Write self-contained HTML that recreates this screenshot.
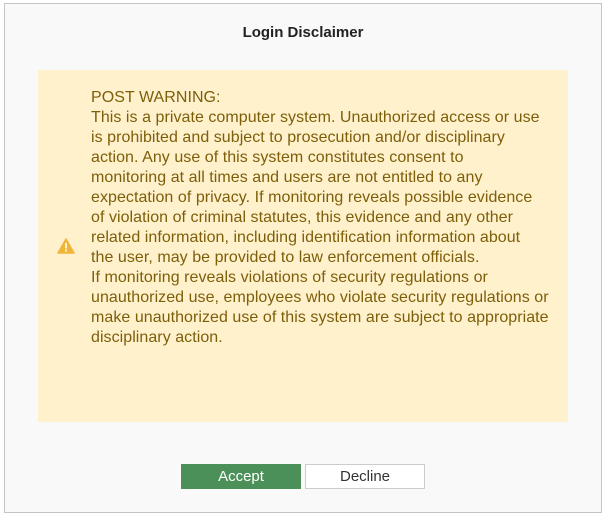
<!DOCTYPE html>
<html><head><style>
html,body{margin:0;padding:0;background:#fff;width:606px;height:516px;overflow:hidden}
.box{position:absolute;left:4px;top:3px;width:596px;height:508px;border:1px solid #c4c4c4;background:#f9f9f9}
.title{position:absolute;left:0;width:100%;top:20px;text-align:center;font:bold 15px "Liberation Sans",sans-serif;color:#222}
.warn{position:absolute;left:33px;top:66px;width:530px;height:352px;background:#fff1cc}
.txt{position:absolute;left:53px;top:18px;font:16px/20px "Liberation Sans",sans-serif;color:#7d5e0a;white-space:nowrap;letter-spacing:0.05px}
.icon{position:absolute;left:19px;top:168px}
.btn{position:absolute;top:460px;width:120px;height:25px;font:15px/25px "Liberation Sans",sans-serif;text-align:center;box-sizing:border-box}
.acc{left:176px;background:#4a9058;color:#fff}
.dec{left:300px;background:#fff;border:1px solid #ccc;color:#333;line-height:23px}
</style></head><body>
<div class="box">
<div class="title">Login Disclaimer</div>
<div class="warn">
<svg class="icon" width="18" height="16" viewBox="0 0 18 16"><path d="M9 1 L17 15 L1 15 Z" fill="#f0b63a" stroke="#f0b63a" stroke-linejoin="round" stroke-width="1.5"/><rect x="8" y="5" width="2" height="5.5" fill="#fff1cc"/><rect x="8" y="11.5" width="2" height="2" fill="#fff1cc"/></svg>
<div class="txt">POST WARNING:<br>This is a private computer system. Unauthorized access or use<br>is prohibited and subject to prosecution and/or disciplinary<br>action. Any use of this system constitutes consent to<br>monitoring at all times and users are not entitled to any<br>expectation of privacy. If monitoring reveals possible evidence<br>of violation of criminal statutes, this evidence and any other<br>related information, including identification information about<br>the user, may be provided to law enforcement officials.<br>If monitoring reveals violations of security regulations or<br>unauthorized use, employees who violate security regulations or<br>make unauthorized use of this system are subject to appropriate<br>disciplinary action.</div>
</div>
<div class="btn acc">Accept</div>
<div class="btn dec">Decline</div>
</div>
</body></html>
